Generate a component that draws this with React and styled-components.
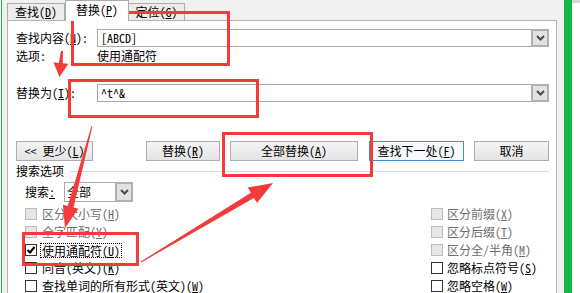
import React from "react";
import styled, { createGlobalStyle } from "styled-components";

const FONT = `"Noto Sans Mono CJK SC", "Noto Sans CJK SC", "DejaVu Sans", sans-serif`;
const RED = "#f33b3b";

const GlobalStyle = createGlobalStyle`
  html, body { margin: 0; padding: 0; background: #fff; }
  body { font-family: ${FONT}; font-size: 12px; }
`;

const Screen = styled.div`
  position: relative;
  width: 580px;
  height: 293px;
  overflow: hidden;
  display: flex;
  font-family: ${FONT};
  font-size: 12px;
  line-height: 14px;
  color: #000;
`;
const EdgeWhite = styled.div`
  width: 1px;
  background: #fff;
`;
const EdgeGreen = styled.div`
  width: ${(p) => p.$w}px;
  background: #15b649;
`;
const RightEdge = styled.div`
  flex: 1;
  background: #fff;
  border-top: 3px solid #d6d6d6;
`;
const Dialog = styled.div`
  width: 562px;
  box-sizing: border-box;
  background: #f0f0f0;
  display: flex;
  flex-direction: column;
  padding-left: 5px;
`;
const TabStrip = styled.div`
  display: flex;
  align-items: flex-end;
  height: 20px;
`;
const Tab = styled.div`
  position: relative;
  z-index: ${(p) => (p.$active ? 1 : 0)};
  box-sizing: border-box;
  width: ${(p) => p.$w}px;
  height: ${(p) => (p.$active ? 21 : 17)}px;
  margin-bottom: ${(p) => (p.$active ? -1 : 0)}px;
  border: 1px solid #acacac;
  border-bottom: none;
  border-left: ${(p) => (p.$noLeft ? "none" : "1px solid #acacac")};
  background: ${(p) => (p.$active ? "#fff" : "#ececec")};
  display: flex;
  align-items: center;
  justify-content: center;
  padding-bottom: ${(p) => (p.$active ? 2 : 0)}px;
`;
const Panel = styled.div`
  flex: 1;
  width: 550px;
  box-sizing: border-box;
  border: 1px solid #b4b4b4;
  border-bottom: none;
  background: #fff;
  padding: 8px 7px 0 8px;
  display: flex;
  flex-direction: column;
`;
const FieldRow = styled.div`
  display: grid;
  grid-template-columns: 81px 452px;
  align-items: center;
  margin-top: ${(p) => p.$mt || 0}px;
  min-height: 14px;
`;
const Combo = styled.div`
  height: 18px;
  box-sizing: border-box;
  border: 1px solid #a9a9a9;
  background: #fff;
  display: flex;
`;
const ComboText = styled.div`
  flex: 1;
  padding-left: 3px;
  line-height: 16px;
`;
const DropButton = styled.div`
  width: 18px;
  margin: -1px -1px -1px 0;
  box-sizing: border-box;
  border: 2px solid #b0b0b0;
  background: #e2e2e2;
  display: flex;
  align-items: center;
  justify-content: center;
`;
const ButtonRow = styled.div`
  display: flex;
  margin-top: 39px;
`;
const Button = styled.div`
  box-sizing: border-box;
  height: 20px;
  width: ${(p) => p.$w}px;
  margin-left: ${(p) => p.$ml || 0}px;
  border: 1px solid ${(p) => (p.$focus ? "#3e8fe0" : "#adadad")};
  background: ${(p) =>
    p.$focus ? "#f7f9fc" : "linear-gradient(#f3f3f3, #e4e4e4)"};
  display: flex;
  align-items: center;
  justify-content: center;
`;
const SectionHead = styled.div`
  display: flex;
  align-items: center;
  gap: 6px;
  margin-top: 3px;
  height: 14px;
`;
const Rule = styled.div`
  flex: 1;
  height: 1px;
  background: #dcdcdc;
`;
const SelectRow = styled.div`
  display: flex;
  align-items: center;
  margin-top: 4px;
  padding-left: 9px;
  gap: 9px;
`;
const Select = styled.div`
  width: 69px;
  height: 20px;
  box-sizing: border-box;
  border: 1px solid #a9a9a9;
  background: #fff;
  display: flex;
`;
const SelectText = styled.div`
  flex: 1;
  padding-left: 2px;
  line-height: 18px;
`;
const Checks = styled.div`
  display: grid;
  grid-template-columns: 406px 1fr;
  grid-auto-rows: 18px;
  margin-top: 3px;
  padding-left: 9px;
`;
const CheckItem = styled.div`
  display: flex;
  align-items: center;
  gap: ${(p) => p.$gap}px;
  color: ${(p) => (p.$disabled ? "#6d6d6d" : "#000")};
`;
const Box = styled.div`
  width: 12px;
  height: 12px;
  box-sizing: border-box;
  border: 1px solid ${(p) => (p.$disabled ? "#bcbcbc" : "#333")};
  background: ${(p) => (p.$disabled ? "#e6e6e6" : "#fff")};
  display: flex;
  align-items: center;
  justify-content: center;
`;
const FocusLabel = styled.span`
  border: 1px dotted #000;
  padding: 0 1px;
  margin-left: -2px;
  line-height: 13px;
`;
const Key = styled.u`
  text-underline-offset: 1px;
`;
const Overlay = styled.svg`
  position: absolute;
  left: 0;
  top: 0;
  pointer-events: none;
`;

const Chevron = () => (
  <svg width="9" height="6" viewBox="0 0 9 6">
    <polyline points="1,1 4.5,4.5 8,1" fill="none" stroke="#4a4a4a" strokeWidth="2" />
  </svg>
);

const Label = ({ text, k, tail = "" }) => (
  <span>
    {text}(<Key>{k}</Key>){tail}
  </span>
);

function arrowPoints(x1, y1, x2, y2, w0, w1, hl, hw) {
  const dx = x2 - x1;
  const dy = y2 - y1;
  const L = Math.hypot(dx, dy);
  const ux = dx / L;
  const uy = dy / L;
  const nx = -uy;
  const ny = ux;
  const bx = x2 - ux * hl;
  const by = y2 - uy * hl;
  const pts = [
    [x1 + (nx * w0) / 2, y1 + (ny * w0) / 2],
    [bx + (nx * w1) / 2, by + (ny * w1) / 2],
    [bx + (nx * hw) / 2, by + (ny * hw) / 2],
    [x2, y2],
    [bx - (nx * hw) / 2, by - (ny * hw) / 2],
    [bx - (nx * w1) / 2, by - (ny * w1) / 2],
    [x1 - (nx * w0) / 2, y1 - (ny * w0) / 2],
  ];
  return pts.map((q) => q.map((v) => v.toFixed(1)).join(",")).join(" ");
}

const Check = ({ disabled, checked, focus, gap = 5, children }) => (
  <CheckItem $disabled={disabled} $gap={gap}>
    <Box $disabled={disabled}>
      {checked && (
        <svg width="10" height="10" viewBox="0 0 10 10">
          <polyline points="1.5,5 4,7.5 8.5,2" fill="none" stroke="#000" strokeWidth="2" />
        </svg>
      )}
    </Box>
    {focus ? <FocusLabel>{children}</FocusLabel> : children}
  </CheckItem>
);

export default function App() {
  return (
    <>
      <GlobalStyle />
      <Screen>
        <EdgeWhite />
        <EdgeGreen $w={1} />
        <Dialog>
          <TabStrip>
            <Tab $w={58}>
              <Label text="查找" k="D" />
            </Tab>
            <Tab $w={64} $active>
              <Label text="替换" k="P" />
            </Tab>
            <Tab $w={56} $noLeft>
              <Label text="定位" k="G" />
            </Tab>
          </TabStrip>
          <Panel>
            <FieldRow>
              <Label text="查找内容" k="N" tail=":" />
              <Combo>
                <ComboText>[ABCD]</ComboText>
                <DropButton>
                  <Chevron />
                </DropButton>
              </Combo>
            </FieldRow>
            <FieldRow $mt={2}>
              <span>选项:</span>
              <span>使用通配符</span>
            </FieldRow>
            <FieldRow $mt={21}>
              <Label text="替换为" k="I" tail=":" />
              <Combo>
                <ComboText>^t^&amp;</ComboText>
                <DropButton>
                  <Chevron />
                </DropButton>
              </Combo>
            </FieldRow>
            <ButtonRow>
              <Button $w={77}>
                <span>
                  &lt;&lt; 更少(<Key>L</Key>)
                </span>
              </Button>
              <Button $w={74} $ml={53}>
                <Label text="替换" k="R" />
              </Button>
              <Button $w={128} $ml={10}>
                <Label text="全部替换" k="A" />
              </Button>
              <Button $w={95} $ml={11} $focus>
                <Label text="查找下一处" k="F" />
              </Button>
              <Button $w={75} $ml={10}>
                取消
              </Button>
            </ButtonRow>
            <SectionHead>
              <span>搜索选项</span>
              <Rule />
            </SectionHead>
            <SelectRow>
              <span>
                搜索<Key>:</Key>
              </span>
              <Select>
                <SelectText>全部</SelectText>
                <DropButton>
                  <Chevron />
                </DropButton>
              </Select>
            </SelectRow>
            <Checks>
              <Check disabled>
                <Label text="区分大小写" k="H" />
              </Check>
              <Check disabled gap={4}>
                <Label text="区分前缀" k="X" />
              </Check>
              <Check disabled>
                <Label text="全字匹配" k="Y" />
              </Check>
              <Check disabled gap={4}>
                <Label text="区分后缀" k="T" />
              </Check>
              <Check checked focus>
                <Label text="使用通配符" k="U" />
              </Check>
              <Check disabled gap={4}>
                <Label text="区分全/半角" k="M" />
              </Check>
              <Check>
                <Label text="同音(英文)" k="K" />
              </Check>
              <Check gap={4}>
                <Label text="忽略标点符号" k="S" />
              </Check>
              <Check>
                <Label text="查找单词的所有形式(英文)" k="W" />
              </Check>
              <Check gap={4}>
                <Label text="忽略空格" k="W" />
              </Check>
            </Checks>
          </Panel>
        </Dialog>
        <EdgeGreen $w={8} />
        <RightEdge />
        <Overlay width="580" height="293" viewBox="0 0 580 293">
          <g fill="none" stroke={RED} strokeWidth="3">
            <rect x="72.5" y="12.5" width="156" height="52" />
            <rect x="69.5" y="80.5" width="188" height="36" />
            <rect x="223.5" y="133.5" width="148" height="42" />
            <rect x="23.5" y="233.5" width="114" height="31" />
          </g>
          <g fill={RED}>
            <polygon points={arrowPoints(62, 51, 59.5, 77, 2, 4, 14, 15)} />
            <polygon points={arrowPoints(92, 126, 65, 228, 1, 6, 22, 16)} />
            <polygon points={arrowPoints(141, 262, 273, 183, 1, 6, 24, 18)} />
          </g>
        </Overlay>
      </Screen>
    </>
  );
}
